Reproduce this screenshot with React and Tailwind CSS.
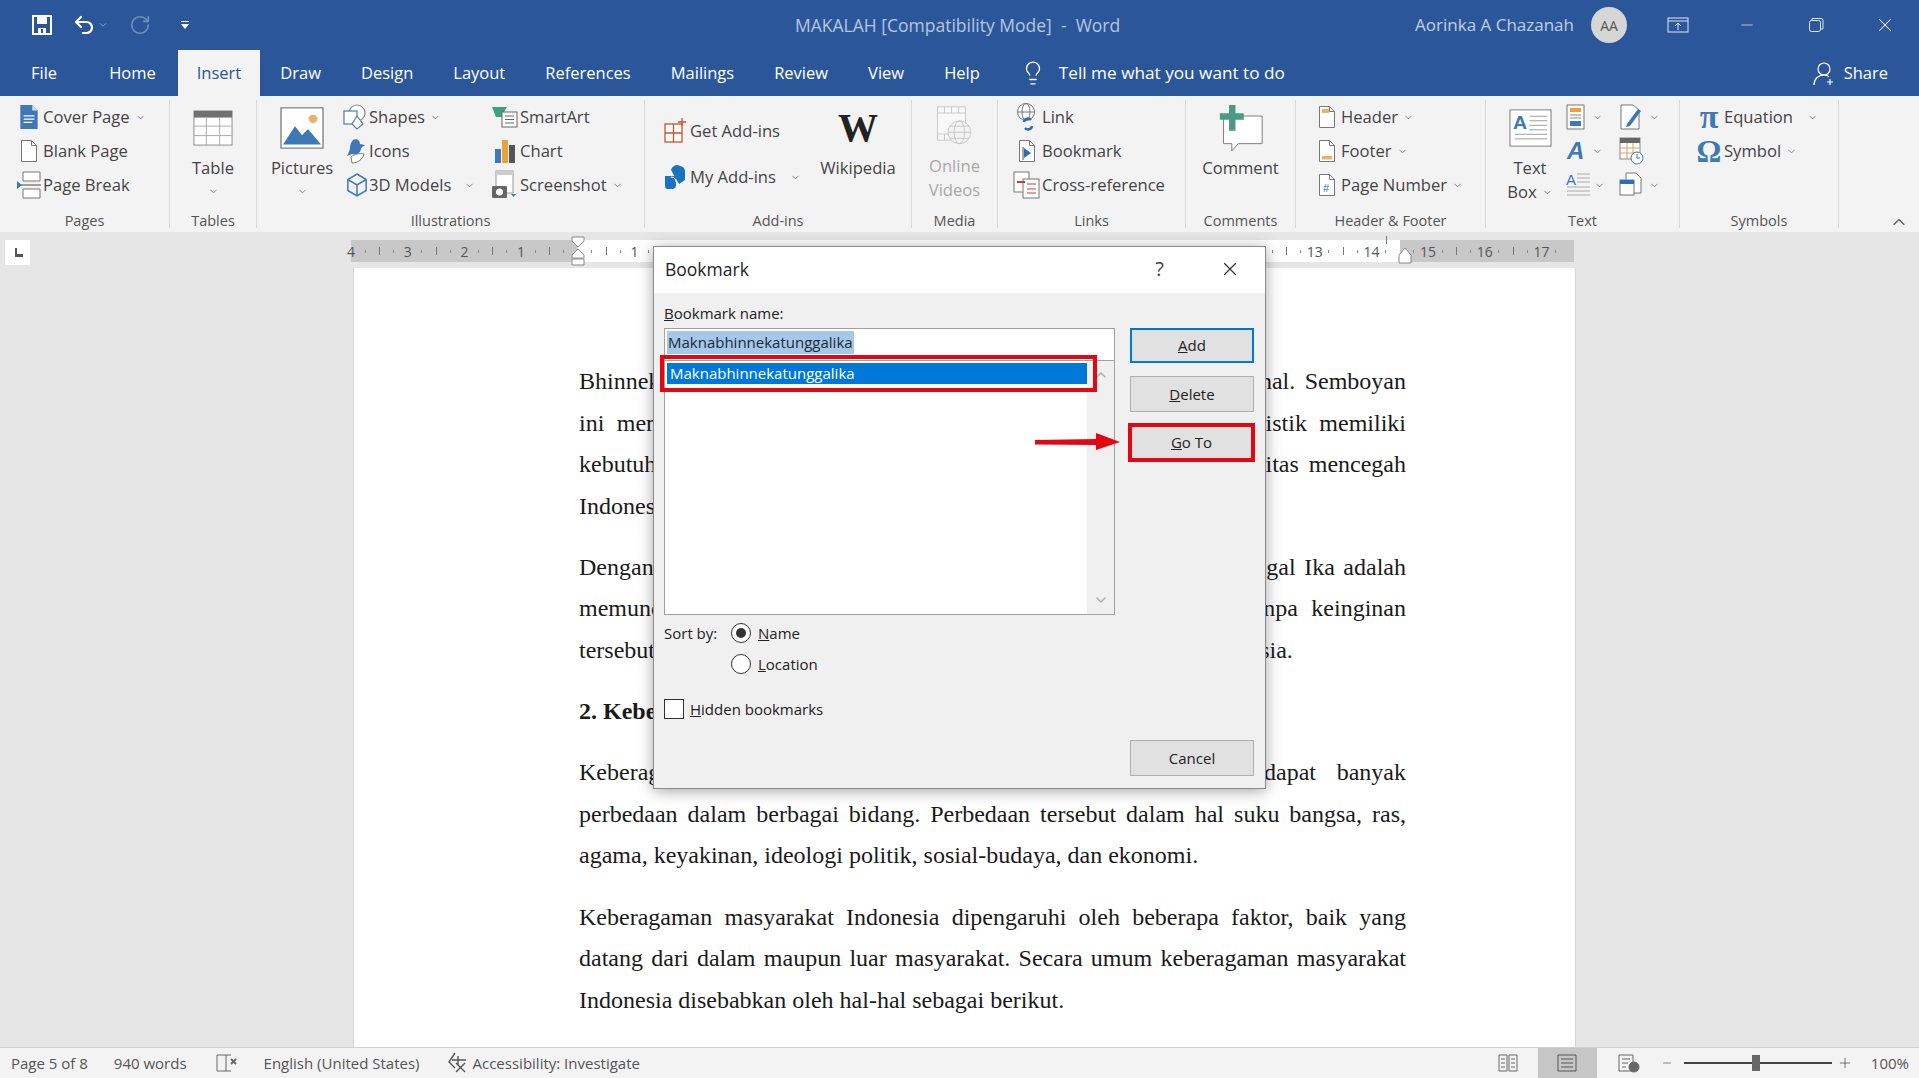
import { Lightbulb, Minus, Plus, X, ChevronUp, ChevronDown, Undo2, RotateCw } from "lucide-react";

const tabs = ["File", "Home", "Insert", "Draw", "Design", "Layout", "References", "Mailings", "Review", "View", "Help"];

// ikon-ikon kecil ribbon
const Doc = ({ children, w = 18, h = 24, fill = "#fff" }) => (
  <svg width={w} height={h} viewBox="0 0 18 24" className="flex-none">
    <path d="M1.5 1.5h10l5 5v16h-15z" fill={fill} stroke="#777" strokeWidth="1" />
    <path d="M11.5 1.5v5h5" fill="none" stroke="#777" strokeWidth="1" />
    {children}
  </svg>
);

const icons = {
  cover: (
    <svg width="20" height="26" viewBox="0 0 18 24">
      <path d="M1 1h11l5 5v17H1z" fill="#3e78b5" />
      <path d="M12 1v5h5" fill="#cfe0f0" />
      <path d="M4 11h10M4 14h10M4 17h8" stroke="#fff" strokeWidth="1.2" />
    </svg>
  ),
  blank: <Doc />,
  pagebreak: (
    <svg width="26" height="28" viewBox="0 0 26 28">
      <path d="M7 1h13l4 0v9H7zM7 18h17v9H7z" fill="#fff" stroke="#777" />
      <path d="M1 14h24" stroke="#666" strokeWidth="1.2" />
      <path d="M1 10l5 4-5 4z" fill="#3e78b5" />
    </svg>
  ),
  table: (
    <svg width="40" height="36" viewBox="0 0 42 38" preserveAspectRatio="none">
      <rect x="1" y="1" width="40" height="36" fill="#fff" stroke="#8a8a8a" />
      <rect x="1" y="1" width="40" height="7" fill="#707070" />
      <path d="M1 17h40M1 27h40M14 8v29M28 8v29" stroke="#aaa" />
    </svg>
  ),
  pictures: (
    <svg width="44" height="42" viewBox="0 0 44 46" preserveAspectRatio="none">
      <rect x="1" y="1" width="42" height="44" fill="#fff" stroke="#555" />
      <circle cx="33" cy="13" r="4.5" fill="#e8b26a" />
      <path d="M3 41l12-20 7 10 6-7 13 17z" fill="#3e78b5" />
    </svg>
  ),
  shapes: (
    <svg width="26" height="26" viewBox="0 0 26 26" fill="none" stroke="#4a7fb5" strokeWidth="1.2" className="-ml-[4px]">
      <circle cx="15" cy="9" r="8" fill="#fff" stroke="#888" />
      <rect x="2" y="7" width="13" height="13" fill="#fff" />
      <path d="M15 12l6 8-6 5-5-5z" fill="#fff" />
    </svg>
  ),
  iconsIcon: (
    <svg width="24" height="28" viewBox="0 0 24 28">
      <path d="M8 3c3-2 7 0 7 4l5 1-4 3c0 5-4 7-9 6L2 19c1-3 3-5 3-8 0-3 1-6 3-8z" fill="#3e78b5" />
      <path d="M6 20c3-3 9-4 13-3-1 5-6 9-12 9 0-2-1-4-1-6z" fill="#fff" stroke="#777" />
    </svg>
  ),
  models: (
    <svg width="22" height="28" viewBox="0 0 24 28" fill="none" stroke="#3e78b5" strokeWidth="1.6">
      <path d="M12 2l10 6v12l-10 6-10-6V8z" />
      <path d="M2 8l10 6 10-6M12 14v12" />
    </svg>
  ),
  smartart: (
    <svg width="28" height="24" viewBox="0 0 28 24">
      <path d="M1 2h15l-3 5 3 5H5z" fill="#3f9f7f" />
      <rect x="11" y="7" width="15" height="15" fill="#fff" stroke="#666" />
      <path d="M14 11h9M14 14.5h9M14 18h9" stroke="#666" />
    </svg>
  ),
  chart: (
    <svg width="24" height="26" viewBox="0 0 24 26">
      <rect x="2" y="11" width="6" height="14" fill="#3e78b5" />
      <rect x="9" y="2" width="6" height="23" fill="#e8a33c" />
      <rect x="16" y="7" width="6" height="18" fill="#555" />
    </svg>
  ),
  screenshot: (
    <svg width="28" height="30" viewBox="0 0 28 30">
      <rect x="5" y="1" width="17" height="22" fill="#fff" stroke="#999" />
      <rect x="5" y="1" width="17" height="4" fill="#ccc" />
      <rect x="1" y="16" width="15" height="12" rx="1" fill="#666" />
      <circle cx="8.5" cy="22" r="3.5" fill="#fff" />
      <path d="M20 24h5l-2.500 3z" fill="#3e78b5" />
    </svg>
  ),
  getaddins: (
    <svg width="24" height="26" viewBox="0 0 24 26" fill="#fff" stroke="#c8552b" strokeWidth="1.3">
      <rect x="2" y="6" width="17" height="18" />
      <path d="M2 15h17M10.500 6v18" />
      <path d="M19 0v8M15 4h8" fill="none" />
    </svg>
  ),
  myaddins: (
    <svg width="24" height="26" viewBox="0 0 24 26">
      <path d="M8 6a6 6 0 0 1 9-4 6 6 0 0 1 5 5v9l-6 4z" fill="#1b72c0" />
      <path d="M2 12h11v10a4 4 0 0 1-4 3H4a3 3 0 0 1-2-3z" fill="#1b72c0" />
      <path d="M8 13c3 0 5 2 5 5" stroke="#fff" fill="none" />
    </svg>
  ),
  videos: (
    <svg width="38" height="42" viewBox="0 0 42 48" fill="none" stroke="#c4c4c4">
      <rect x="1" y="1" width="32" height="38" fill="#f8f8f8" />
      <path d="M1 8h32M1 32h32M9 1v7M17 1v7M25 1v7M9 32v7M17 32v7M25 32v7" />
      <circle cx="26" cy="30" r="13" fill="#f3f3f3" />
      <ellipse cx="26" cy="30" rx="6" ry="13" />
      <path d="M13 30h26M15 23h22M15 37h22" />
    </svg>
  ),
  link: (
    <svg width="26" height="30" viewBox="0 0 26 30">
      <circle cx="12" cy="10" r="8.500" fill="#fff" stroke="#777" />
      <ellipse cx="12" cy="10" rx="4" ry="8.500" fill="none" stroke="#777" />
      <path d="M3.500 10h17" stroke="#777" />
      <path d="M10 20a4 4 0 0 1 7-2M18 24a4 4 0 0 1-7 2" fill="none" stroke="#2a70b8" strokeWidth="2.500" />
    </svg>
  ),
  bookmark: (
    <Doc>
      <path d="M6 9l7 5-7 5z" fill="#2a70b8" />
      <path d="M5 8v13" stroke="#555" />
    </Doc>
  ),
  crossref: (
    <svg width="28" height="28" viewBox="0 0 28 28">
      <rect x="1" y="1" width="15" height="20" fill="#fff" stroke="#777" />
      <rect x="10" y="8" width="16" height="19" fill="#fff" stroke="#777" />
      <path d="M4 11h8" stroke="#c8402b" strokeWidth="2" />
      <path d="M14 13h9M14 18h9M14 22h9" stroke="#c8402b" />
    </svg>
  ),
  comment: (
    <svg width="46" height="46" viewBox="0 0 50 50">
      <path d="M6 12h42v30H22l-7 8v-8H6z" fill="#fff" stroke="#777" />
      <path d="M12 0h7v9h9v7h-9v12h-7V16H2V9h10z" fill="#4d9a84" />
    </svg>
  ),
  header: (
    <Doc h={26}>
      <rect x="4" y="4" width="7" height="4" fill="#e8b26a" />
    </Doc>
  ),
  footer: (
    <Doc h={26}>
      <rect x="4" y="17" width="10" height="3.500" fill="#e8b26a" />
    </Doc>
  ),
  pagenumber: (
    <Doc h={26}>
      <text x="5" y="19" fontSize="11" fill="#2a70b8" fontFamily="Liberation Sans">#</text>
    </Doc>
  ),
  textbox: (
    <svg width="43" height="38" viewBox="0 0 44 42" preserveAspectRatio="none">
      <rect x="1" y="1" width="42" height="40" fill="#fff" stroke="#777" />
      <text x="4" y="22" fontSize="20" fontWeight="700" fill="#3e78b5" fontFamily="Liberation Sans">A</text>
      <path d="M21 8h18M21 13h18M21 18h18M21 23h18M6 28h33M6 33h33" stroke="#999" />
    </svg>
  ),
  quick: (
    <svg width="20" height="26" viewBox="0 0 20 26">
      <rect x="1" y="1" width="17" height="24" fill="#fff" stroke="#777" />
      <rect x="4" y="4" width="11" height="4" fill="#e8a33c" />
      <path d="M4 11h11M4 14h11" stroke="#888" />
      <rect x="4" y="17" width="11" height="5" fill="#3e78b5" />
    </svg>
  ),
  signature: (
    <svg width="24" height="26" viewBox="0 0 24 26">
      <path d="M2 1h12l6 5v19H2z" fill="#fff" stroke="#777" />
      <path d="M8 20L19 5l3 2-11 15-4 1z" fill="#3e78b5" />
    </svg>
  ),
  datetime: (
    <svg width="26" height="28" viewBox="0 0 26 28">
      <rect x="1" y="1" width="20" height="21" fill="#fff" stroke="#888" />
      <rect x="1" y="1" width="20" height="5" fill="#666" />
      <path d="M1 11h20M1 16h20M8 6v16M14 6v16" stroke="#e0a060" />
      <circle cx="18" cy="21" r="6" fill="#fff" stroke="#3e78b5" />
      <path d="M18 17v4h3" stroke="#3e78b5" fill="none" />
    </svg>
  ),
  dropcap: (
    <svg width="26" height="28" viewBox="0 0 26 28">
      <text x="0" y="14" fontSize="15" fill="#3e78b5" fontFamily="Liberation Sans">A</text>
      <path d="M11 3h13M11 7h13M11 11h13M1 16h23M1 20h23M1 24h23" stroke="#aaa" />
    </svg>
  ),
  object: (
    <svg width="24" height="26" viewBox="0 0 24 26">
      <path d="M7 1h10l5 5v15H7z" fill="#fff" stroke="#777" />
      <rect x="1" y="8" width="14" height="15" fill="#fff" stroke="#777" />
      <rect x="1" y="8" width="14" height="4" fill="#2a70b8" />
    </svg>
  ),
};

const Chevron = ({ grey }) => (
  <ChevronDown size={11} strokeWidth={1.6} className={grey ? "text-[#aaa] flex-none" : "text-[#666] flex-none"} />
);

function SmallRow({ icon, label, chevron, iconWidth = "w-[24px]", gap = "ml-[5px]" }) {
  return (
    <div className="flex items-center h-[34px] whitespace-nowrap">
      <span className={`${iconWidth} flex justify-center flex-none`}>{icon}</span>
      <span>{label}</span>
      {chevron && <span className={gap}><Chevron /></span>}
    </div>
  );
}

function Large({ icon, lines, chevron, width, muted }) {
  return (
    <div className={`${width} flex flex-col items-center flex-none ${muted ? "text-[#a8a8a8]" : ""}`}>
      <div className="h-[56px] flex items-center justify-center">{icon}</div>
      {lines.map((l) => (
        <div key={l} className="h-[24px] leading-[24px] whitespace-nowrap">{l}</div>
      ))}
      {chevron && <div className="h-[22px] flex items-center"><Chevron /></div>}
    </div>
  );
}

function Group({ label, width, children }) {
  return (
    <div className={`${width} flex-none h-[128px] mt-[4px] flex flex-col border-r border-[#d8d8d8]`}>
      <div className="h-[102px] flex flex-none">{children}</div>
      <div className="h-[22px] mt-[8px] flex-none leading-[22px] text-center text-[14.5px] text-[#555]">{label}</div>
    </div>
  );
}

function Ribbon() {
  return (
    <div className="h-[136px] flex-none bg-[#f3f3f3] flex text-[16.6px] text-[#444]">
      <Group label="Pages" width="w-[170px]">
        <div className="pl-[14px]">
          <SmallRow icon={icons.cover} label="Cover Page" chevron iconWidth="w-[29px]" />
          <SmallRow icon={icons.blank} label="Blank Page" iconWidth="w-[29px]" />
          <SmallRow icon={icons.pagebreak} label="Page Break" iconWidth="w-[29px]" />
        </div>
      </Group>
      <Group label="Tables" width="w-[87px]">
        <Large icon={icons.table} lines={["Table"]} chevron width="w-full" />
      </Group>
      <Group label="Illustrations" width="w-[388px]">
        <div className="ml-[2px]">
          <Large icon={icons.pictures} lines={["Pictures"]} chevron width="w-[86px]" />
        </div>
        <div className="w-[145px]">
          <SmallRow icon={icons.shapes} label="Shapes" chevron />
          <SmallRow icon={icons.iconsIcon} label="Icons" />
          <SmallRow icon={icons.models} label="3D Models" chevron gap="ml-[13px]" />
        </div>
        <div>
          <SmallRow icon={icons.smartart} label="SmartArt" iconWidth="w-[30px]" />
          <SmallRow icon={icons.chart} label="Chart" iconWidth="w-[30px]" />
          <SmallRow icon={icons.screenshot} label="Screenshot" chevron iconWidth="w-[30px]" />
        </div>
      </Group>
      <Group label="Add-ins" width="w-[267px]">
        <div className="pl-[15px] w-[179px] pt-[14px] flex flex-col gap-[12px]">
          <SmallRow icon={icons.getaddins} label="Get Add-ins" iconWidth="w-[30px]" />
          <SmallRow icon={icons.myaddins} label="My Add-ins" chevron iconWidth="w-[30px]" gap="ml-[14px]" />
        </div>
        <Large
          icon={<span className="font-['Liberation_Serif',serif] text-[40px] leading-none font-bold text-[#222]">W</span>}
          lines={["Wikipedia"]}
          width="w-[68px]"
        />
      </Group>
      <Group label="Media" width="w-[86px]">
        <Large icon={icons.videos} lines={["Online", "Videos"]} width="w-full" muted />
      </Group>
      <Group label="Links" width="w-[188px]">
        <div className="pl-[14px]">
          <SmallRow icon={icons.link} label="Link" iconWidth="w-[30px]" />
          <SmallRow icon={icons.bookmark} label="Bookmark" iconWidth="w-[30px]" />
          <SmallRow icon={icons.crossref} label="Cross-reference" iconWidth="w-[30px]" />
        </div>
      </Group>
      <Group label="Comments" width="w-[110px]">
        <Large icon={icons.comment} lines={["Comment"]} width="w-full" />
      </Group>
      <Group label="Header & Footer" width="w-[190px]">
        <div className="pl-[16px]">
          <SmallRow icon={icons.header} label="Header" chevron iconWidth="w-[29px]" />
          <SmallRow icon={icons.footer} label="Footer" chevron iconWidth="w-[29px]" />
          <SmallRow icon={icons.pagenumber} label="Page Number" chevron iconWidth="w-[29px]" />
        </div>
      </Group>
      <Group label="Text" width="w-[194px]">
        <div className="w-[80px] pl-[8px]">
          <Large icon={icons.textbox} lines={["Text"]} width="w-[72px]" />
          <div className="w-[72px] flex items-center justify-center gap-[5px] h-[24px]">Box <Chevron /></div>
        </div>
        <div className="grid grid-cols-[53px_1fr] w-[108px] content-start">
          <div className="h-[34px] flex items-center gap-[6px]">{icons.quick}<Chevron /></div>
          <div className="h-[34px] flex items-center gap-[6px]">{icons.signature}<Chevron /></div>
          <div className="h-[34px] flex items-center gap-[8px] pl-[1px]">
            <span className="font-['Liberation_Sans',sans-serif] italic font-bold text-[24px] text-[#3e78b5] leading-none">A</span>
            <Chevron />
          </div>
          <div className="h-[34px] flex items-center">{icons.datetime}</div>
          <div className="h-[34px] flex items-center gap-[2px]">{icons.dropcap}<Chevron /></div>
          <div className="h-[34px] flex items-center gap-[6px]">{icons.object}<Chevron /></div>
        </div>
      </Group>
      <Group label="Symbols" width="w-[159px]">
        <div className="pl-[14px]">
          <SmallRow
            icon={<span className="font-['Liberation_Serif',serif] text-[34px] font-bold leading-none text-[#3e78b5]">π</span>}
            label="Equation"
            chevron
            iconWidth="w-[30px]"
            gap="ml-[14px]"
          />
          <SmallRow
            icon={<span className="font-['Liberation_Serif',serif] text-[31px] font-bold leading-none text-[#3e78b5]">Ω</span>}
            label="Symbol"
            chevron
            iconWidth="w-[30px]"
          />
        </div>
      </Group>
      <div className="flex-1 flex justify-end items-end pr-[10px]">
        <ChevronUp size={20} strokeWidth={1.4} className="text-[#555]" />
      </div>
    </div>
  );
}

function Ruler() {
  const cells = Array.from({ length: 86 }, (_, i) => i);
  return (
    <div className="h-[36px] bg-[#e6e6e6] flex flex-none">
      <div className="w-[351px] flex-none pl-[5px] pt-[8px]">
        <div className="w-[25px] h-[25px] bg-white flex items-center justify-center">
          <svg width="10" height="10" viewBox="0 0 10 10">
            <path d="M2 0h2v6h6v3H2z" fill="#555" />
          </svg>
        </div>
      </div>
      <div className="flex h-[22px] mt-[8px] text-[14px] text-[#555]">
        {cells.map((i) => {
          const pos = i - 16;
          const white = i >= 16 && i < 74;
          const isNum = pos % 4 === 0 && pos !== 0;
          return (
            <div key={i} className={`w-[14.175px] flex-none flex items-center ${white ? "bg-white" : "bg-[#c8c8c8]"}`}>
              <div className="w-0 flex justify-center">
                {isNum && <span>{Math.abs(pos / 4)}</span>}
                {!isNum && pos !== 0 && (pos % 2 === 0
                  ? <span className="flex-none w-px h-[8px] bg-[#777]" />
                  : <span className="flex-none w-px h-[3px] bg-[#888]" />)}
                {pos === 0 && (
                  <svg width="16" height="30" viewBox="0 0 16 30" className="flex-none">
                    <path d="M2 1h12v4l-6 6-6-6zM8 13l6 6v3H2v-3zM2 23h12v6H2z" fill="#fff" stroke="#888" />
                  </svg>
                )}
                {i === 74 && (
                  <svg width="16" height="20" viewBox="0 0 16 20" className="flex-none mt-[10px] ml-[10px]">
                    <path d="M8 2l6 7v8H2V9z" fill="#fff" stroke="#888" />
                  </svg>
                )}
              </div>
            </div>
          );
        })}
        <div className="w-[4px] bg-[#c8c8c8]" />
      </div>
    </div>
  );
}

const paragraphs = [
  {
    lines: [
      "Bhinneka Tunggal Ika adalah semboyan negara yang sangat fenomenal. Semboyan",
      "ini mempersatukan seluruh bangsa Indonesia sebagai negara pluralistik memiliki",
      "kebutuhan untuk menjaga keutuhan negara dan persatuan serta identitas mencegah",
    ],
    last: "Indonesia terpecah belah.",
  },
  {
    lines: [
      "Dengan demikian, makna yang terkandung semboyan Bhinneka Tunggal Ika adalah",
      "memunculkan sikap saling menghargai perbedaan antar sesama tanpa keinginan",
    ],
    last: "tersebut untuk saling menindas demi keutuhan kesatuan bangsa Indonesia.",
  },
  { heading: "2. Keberagaman Masyarakat Indonesia" },
  {
    lines: [
      "Keberagaman masyarakat terjadi karena dalam masyarakat terdapat banyak",
      "perbedaan dalam berbagai bidang. Perbedaan tersebut dalam hal suku bangsa, ras,",
    ],
    last: "agama, keyakinan, ideologi politik, sosial-budaya, dan ekonomi.",
  },
  {
    lines: [
      "Keberagaman masyarakat Indonesia dipengaruhi oleh beberapa faktor, baik yang",
      "datang dari dalam maupun luar masyarakat. Secara umum keberagaman masyarakat",
    ],
    last: "Indonesia disebabkan oleh hal-hal sebagai berikut.",
  },
];

function Page() {
  return (
    <div className="flex-1 min-h-0 bg-[#e6e6e6] overflow-hidden pl-[353px]">
      <div className="w-[1223px] h-full bg-white border-x border-[#d4d4d4] pl-[225px] pt-[93px] font-['Liberation_Serif',serif] text-[24px] leading-[41.500px] text-[#1a1a1a]">
        <div className="w-[827px] flex flex-col gap-[19.800px]">
          {paragraphs.map((p, idx) =>
            p.heading ? (
              <div key={idx} className="font-bold">{p.heading}</div>
            ) : (
              <div key={idx}>
                {p.lines.map((l) => (
                  <div key={l} className="[text-align:justify] [text-align-last:justify]">{l}</div>
                ))}
                <div>{p.last}</div>
              </div>
            )
          )}
        </div>
      </div>
    </div>
  );
}

function DlgButton({ children, className = "border border-[#adadad]" }) {
  return (
    <div className={`w-[124px] bg-[#e1e1e1] flex items-center justify-center ${className}`}>{children}</div>
  );
}

function Dialog() {
  return (
    <div className="absolute left-[653px] top-[246px] w-[613px] h-[543px] border border-[#8a8a8a] bg-[#f0f0f0] shadow-[0_2px_14px_rgba(0,0,0,0.35)] text-[15px] text-[#222] flex flex-col">
      <div className="h-[46px] bg-white flex items-center flex-none pl-[11px] pb-[2px] text-[17.500px]">
        <span>Bookmark</span>
        <span className="ml-auto mr-[55px] text-[20px] text-[#444]">?</span>
        <X size={22} strokeWidth={1.3} className="mr-[24px] text-[#333]" />
      </div>
      <div className="flex-1 flex pl-[10px] pt-[8px]">
        <div className="w-[451px]">
          <div className="h-[24px] leading-[24px]"><u>B</u>ookmark name:</div>
          <div className="h-[32px] mt-[3px] bg-white border border-[#a0a0a0] border-b-0 pl-[2px] pt-[2px]">
            <span className="bg-[#a6c8e8] text-[#1a2a3a] inline-block leading-[23px] px-px">Maknabhinnekatunggalika</span>
          </div>
          <div className="h-[255px] bg-white border border-[#a0a0a0] flex">
            <div className="flex-1 pl-[2px] pt-[2px]">
              <div className="h-[21px] bg-[#0078d7] text-white leading-[21px] pl-[3px]">Maknabhinnekatunggalika</div>
            </div>
            <div className="w-[27px] bg-[#f0f0f0] flex flex-col items-center justify-between py-[6px] text-[#aaa]">
              <ChevronUp size={16} />
              <ChevronDown size={16} />
            </div>
          </div>
          <div className="flex mt-[6px]">
            <div className="w-[67px] pt-[1px]">Sort by:</div>
            <div>
              <div className="flex items-center h-[24px] gap-[6px]">
                <div className="w-[20px] h-[20px] rounded-full border border-[#333] bg-white flex items-center justify-center">
                  <div className="w-[10px] h-[10px] rounded-full bg-[#333]" />
                </div>
                <span className="pl-[1px]"><u>N</u>ame</span>
              </div>
              <div className="flex items-center h-[24px] gap-[6px] mt-[7px]">
                <div className="w-[20px] h-[20px] rounded-full border border-[#333] bg-white" />
                <span className="pl-[1px]"><u>L</u>ocation</span>
              </div>
            </div>
          </div>
          <div className="flex items-center gap-[6px] mt-[22px]">
            <div className="w-[20px] h-[20px] border border-[#333] bg-white" />
            <span><u>H</u>idden bookmarks</span>
          </div>
        </div>
        <div className="ml-[15px] flex flex-col w-[124px] relative">
          <DlgButton className="border-2 border-[#0078d7] h-[35px] mt-[27px]"><span><u>A</u>dd</span></DlgButton>
          <DlgButton className="border border-[#adadad] h-[36px] mt-[13px]"><span><u>D</u>elete</span></DlgButton>
          <DlgButton className="border-4 border-[#e30613] h-[39px] mt-[11px] w-[127px] -ml-[2px]"><span><u>G</u>o To</span></DlgButton>
          <DlgButton className="border border-[#adadad] h-[36px] mt-[278px]">Cancel</DlgButton>
        </div>
      </div>

      {/* anotasi merah di atas dialog */}
      <div className="absolute left-[6px] top-[108px] w-[437px] h-[37px] border-[4px] border-[#e30613]" />
      <svg width="88" height="20" viewBox="0 0 88 20" className="absolute left-[380px] top-[185px]">
        <path d="M1 8L62 7 62 1 86 10 62 18 62 13 1 12.500z" fill="#e30613" />
      </svg>
    </div>
  );
}

export default function App() {
  return (
    <div className="relative w-[1919px] h-[1078px] overflow-hidden flex flex-col font-['Open_Sans',sans-serif] bg-[#e6e6e6]">
      {/* title bar */}
      <div className="h-[50px] flex-none bg-[#2b579a] flex items-center text-[#fff] relative">
        <svg width="22" height="22" viewBox="0 0 22 22" className="ml-[31px]">
          <path d="M2 2h18v18H2z" fill="none" stroke="#fff" strokeWidth="2" />
          <path d="M6 2h10v8H6zM7 14h8v6H7z" fill="#fff" />
          <rect x="10" y="15" width="2" height="4" fill="#2b579a" />
        </svg>
        <Undo2 size={24} strokeWidth={2.2} className="ml-[19px]" />
        <ChevronDown size={10} className="ml-[2px] text-[#9fb6d6]" />
        <RotateCw size={22} strokeWidth={1.8} className="ml-[21px] text-[#6f8fbd]" />
        <div className="ml-[30px] flex flex-col items-center gap-[2px]">
          <span className="w-[8px] h-[1.500px] bg-white" />
          <span className="border-x-[4px] border-t-[5px] border-x-transparent border-t-white" />
        </div>
        <span className="ml-[606px] text-[17.500px] text-[#b5c6e0]">MAKALAH [Compatibility Mode]{"\u00a0\u00a0-\u00a0\u00a0"}Word</span>
        <div className="ml-auto mr-[23px] flex items-center">
          <span className="text-[17px] text-[#c0cfe5]">Aorinka A Chazanah</span>
          <div className="ml-[17px] w-[36px] h-[36px] rounded-full bg-[#d6d6d6] flex items-center justify-center text-[14px] text-[#555]">AA</div>
          <svg width="22" height="16" viewBox="0 0 22 16" className="ml-[40px]" fill="none" stroke="#e0e6f0">
            <rect x="1" y="1" width="20" height="14" />
            <path d="M1 4h20M11 13V6M8 9l3-3 3 3" />
          </svg>
          <Minus size={18} strokeWidth={1} className="ml-[49px] text-[#dfe6f1]" />
          <svg width="16" height="16" viewBox="0 0 16 16" className="ml-[52px]" fill="none" stroke="#dfe6f1">
            <rect x="1.500" y="3.500" width="11" height="11" rx="2" />
            <path d="M4 3.500V1.500h9a2 2 0 0 1 2 2V12h-2.500" />
          </svg>
          <X size={22} strokeWidth={1.1} className="ml-[50px] text-[#eef2f8]" />
        </div>
      </div>

      {/* tabs */}
      <div className="h-[46px] flex-none bg-[#2b579a] flex items-stretch text-white text-[16.500px] pl-[11px]">
        {tabs.map((t) => (
          <div
            key={t}
            className={
              t === "Insert"
                ? "px-[19px] flex items-center bg-[#f3f3f3] text-[#2b579a]"
                : t === "File"
                  ? "pl-[20px] pr-[32px] flex items-center"
                  : t === "Home"
                    ? "pl-[20px] pr-[22px] flex items-center"
                    : "px-[20px] flex items-center"
            }
          >
            {t}
          </div>
        ))}
        <div className="ml-[20px] flex items-center gap-[13px] text-[17.200px]">
          <Lightbulb size={26} strokeWidth={1.2} />
          <span>Tell me what you want to do</span>
        </div>
        <div className="ml-auto mr-[31px] flex items-center gap-[8px]">
          <svg width="24" height="26" viewBox="0 0 24 26" fill="none" stroke="#fff" strokeWidth="1.200">
            <circle cx="12" cy="9" r="6" />
            <path d="M2 25c0-6 4-10 10-10 2 0 4 .5 5 2M18 19v6M15 22h6" />
          </svg>
          <span>Share</span>
        </div>
      </div>

      <Ribbon />
      <Ruler />
      <Page />

      {/* status bar */}
      <div className="h-[31px] flex-none bg-[#f3f3f3] border-t border-[#d0d0d0] flex items-center text-[15px] text-[#555]">
        <span className="ml-[11px]">Page 5 of 8</span>
        <span className="ml-[26px]">940 words</span>
        <svg width="22" height="20" viewBox="0 0 22 20" fill="none" stroke="#666" className="ml-[29px]">
          <path d="M1 2h9v16H1zM10 2h5M10 18h5" />
          <path d="M15 6l5 5M20 6l-5 5" strokeWidth="1.800" />
        </svg>
        <span className="ml-[26px]">English (United States)</span>
        <svg width="24" height="24" viewBox="0 0 24 24" fill="none" stroke="#555" strokeWidth="1.400" className="ml-[26px]">
          <path d="M9 2L3 11l6 6M6 9h14M12 5v9M10 21l9-9M10 12l9 9" />
        </svg>
        <span className="ml-[3px]">Accessibility: Investigate</span>

        <div className="ml-auto flex items-center h-full">
          <svg width="20" height="20" viewBox="0 0 20 20" fill="none" stroke="#666" className="mr-[20px]">
            <path d="M1 2h8v16H1zM11 2h8v16h-8zM3 6h4M3 10h4M3 14h4M13 6h4M13 10h4M13 14h4" />
          </svg>
          <div className="w-[59px] h-full bg-[#c6c6c6] flex items-center justify-center">
            <svg width="20" height="20" viewBox="0 0 20 20" fill="none" stroke="#555">
              <path d="M1 2h18v16H1zM4 6h12M4 10h12M4 14h12" />
            </svg>
          </div>
          <svg width="22" height="20" viewBox="0 0 22 20" fill="none" stroke="#666" className="ml-[21px]">
            <path d="M1 2h14v16H1zM4 6h8M4 10h6M4 14h4" />
            <circle cx="16" cy="14" r="5" fill="#666" />
          </svg>
          <Minus size={12} strokeWidth={1.4} className="ml-[21px]" />
          <div className="ml-[11px] w-[148px] h-[2px] bg-[#444] flex items-center pl-[68px]">
            <div className="w-[8px] h-[16px] bg-[#666]" />
          </div>
          <Plus size={16} strokeWidth={1.2} className="ml-[5px]" />
          <span className="ml-[18px] mr-[10px]">100%</span>
        </div>
      </div>

      <Dialog />
    </div>
  );
}
